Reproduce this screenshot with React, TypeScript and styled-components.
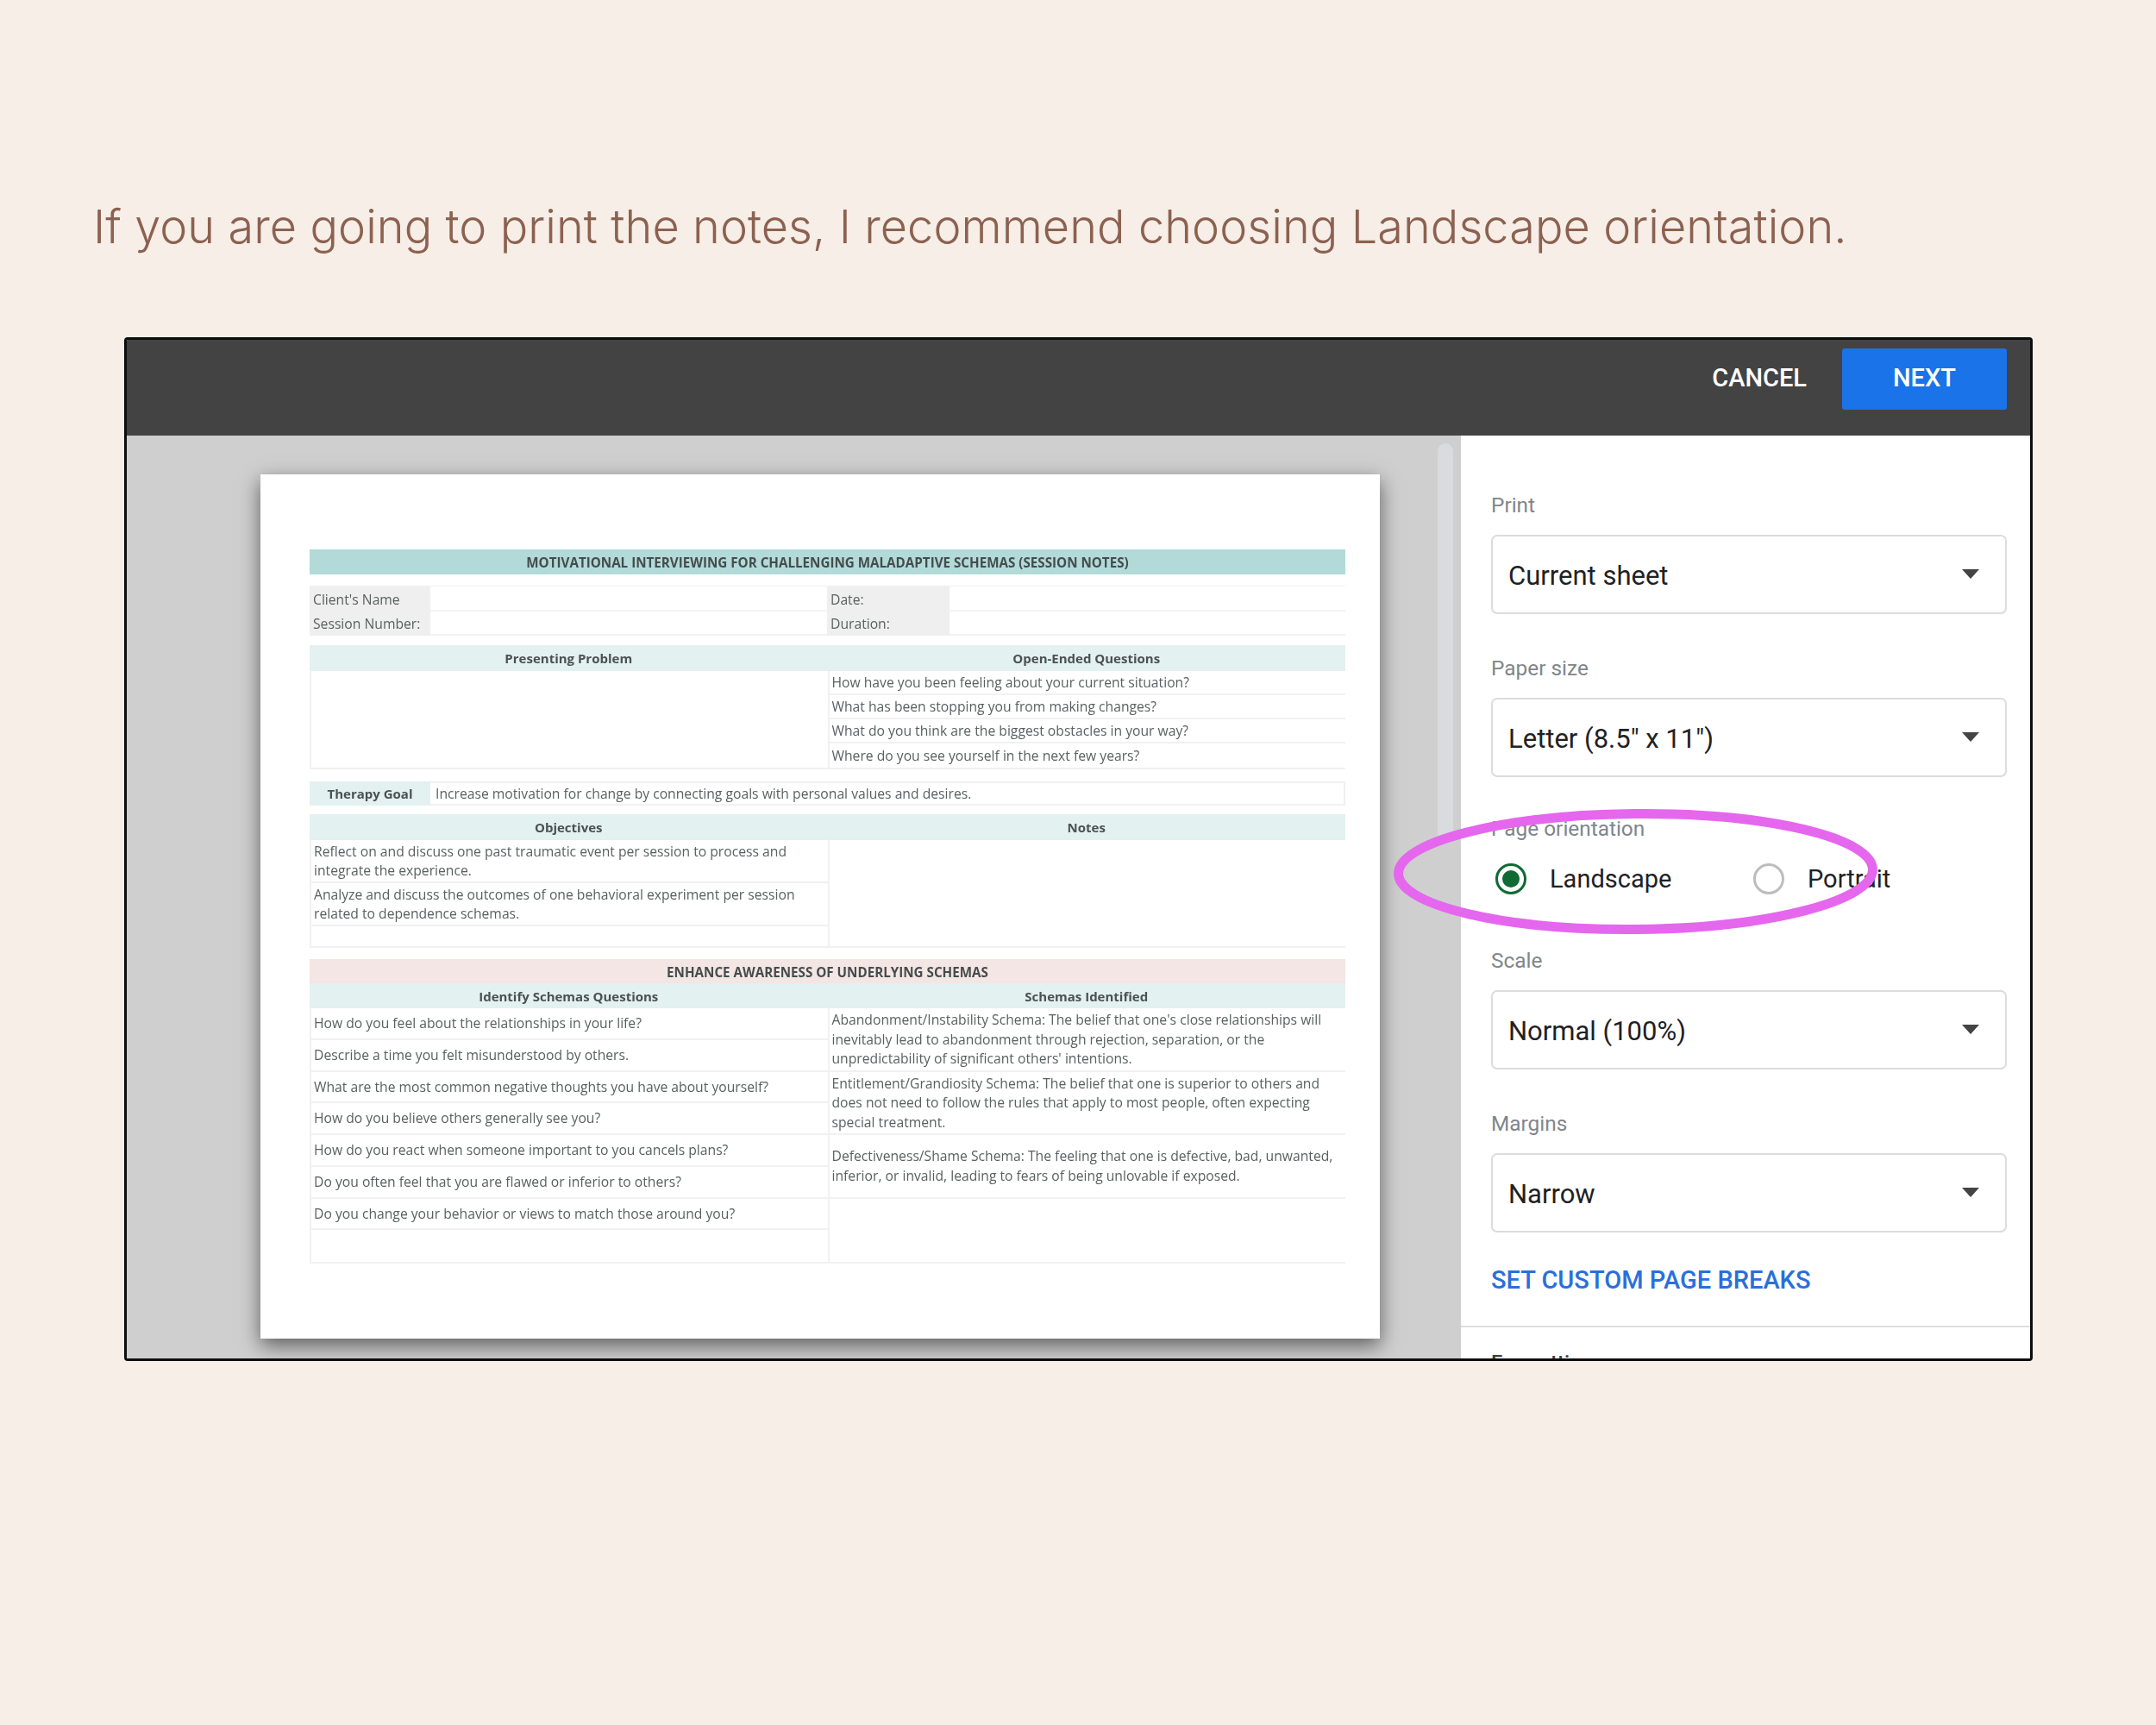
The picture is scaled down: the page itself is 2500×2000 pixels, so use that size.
import React from 'react';
import styled, { createGlobalStyle } from 'styled-components';

const GlobalStyle = createGlobalStyle`
  html, body {
    margin: 0;
    padding: 0;
    background: #f6eee7;
  }
`;

const Canvas = styled.main`
  width: 2500px;
  height: 2000px;
  background: #f6eee7;
  padding: 228px 0 0 108px;
  box-sizing: border-box;
  overflow: hidden;
`;

const Headline = styled.h1`
  margin: 0;
  height: 70px;
  font-family: 'Inter', sans-serif;
  font-weight: 300;
  font-size: 54px;
  line-height: 70px;
  letter-spacing: 0.08px;
  white-space: nowrap;
  color: #8c6150;
`;

const ShotWrap = styled.div`
  position: relative;
  width: 2213px;
  margin: 93px 0 0 36px;
`;

const Shot = styled.section`
  width: 2213px;
  height: 1187px;
  box-sizing: border-box;
  border: 3px solid #0d0d0d;
  border-radius: 4px;
  overflow: hidden;
  display: flex;
  flex-direction: column;
`;

const TopBar = styled.header`
  flex: 0 0 111px;
  background: #434343;
  display: flex;
  justify-content: flex-end;
  align-items: flex-start;
  padding: 10px 27px 0 0;
  box-sizing: border-box;
`;

const ActionButton = styled.button<{ $primary?: boolean }>`
  height: 71px;
  width: ${(p) => (p.$primary ? '191px' : 'auto')};
  margin-left: ${(p) => (p.$primary ? '41px' : '0')};
  padding: 0 0 3px;
  border: none;
  border-radius: 3px;
  background: ${(p) => (p.$primary ? '#1a73e8' : 'transparent')};
  color: #fff;
  font-family: 'Roboto', sans-serif;
  font-weight: 500;
  font-size: 29px;
`;

const Workspace = styled.div`
  flex: 1;
  min-height: 0;
  display: flex;
`;

const Preview = styled.div`
  flex: 0 0 1547px;
  background: #cfcfcf;
  display: flex;
  align-items: flex-start;
  padding: 9px 0 0 155px;
  box-sizing: border-box;
  overflow: hidden;
`;

const Scrollbar = styled.div`
  flex: 0 0 18px;
  height: 464px;
  margin-left: 67px;
  border-radius: 9px;
  background: #d9dbdf;
`;

const SheetPage = styled.article`
  flex: 0 0 1298px;
  height: 1002px;
  margin-top: 36px;
  box-sizing: border-box;
  padding: 87px 40px 0 57px;
  background: #fff;
  box-shadow: 0 8px 22px rgba(0, 0, 0, 0.55);
  font-family: 'Open Sans', sans-serif;
  font-size: 15.7px;
  color: #5a5f5f;
  filter: blur(0.45px);
`;

const TitleBar = styled.div<{ $tone: string; $top: number; $h: number }>`
  height: ${(p) => p.$h}px;
  margin-top: ${(p) => p.$top}px;
  box-sizing: border-box;
  padding-top: 1px;
  background: ${(p) => p.$tone};
  display: flex;
  align-items: center;
  justify-content: center;
  font-weight: 700;
  font-size: 15.2px;
  color: #454c4c;
  white-space: nowrap;
`;

const InfoGrid = styled.div`
  margin-top: 13px;
  display: grid;
  grid-template-columns: 140px 460px 142px 1fr;
  grid-template-rows: 29px 28px;
  border-top: 1px solid #f0f0f0;
`;

const InfoLabel = styled.div`
  background: #efefef;
  display: flex;
  align-items: center;
  padding-left: 4px;
  white-space: nowrap;
`;

const InfoValue = styled.div`
  border-bottom: 2px solid #f3f3f3;
`;

const HeaderRow = styled.div<{ $top?: number; $h?: number }>`
  margin-top: ${(p) => p.$top ?? 0}px;
  height: ${(p) => p.$h ?? 30}px;
  background: #e3f1f0;
  display: grid;
  grid-template-columns: 1fr 1fr;
`;

const HeaderCell = styled.div`
  display: flex;
  align-items: center;
  justify-content: center;
  font-weight: 700;
  font-size: 15px;
  color: #4b5151;
  white-space: nowrap;
`;

const SplitBody = styled.div`
  display: grid;
  grid-template-columns: 1fr 1fr;
  border-bottom: 2px solid #f1f1f1;
`;

const SplitColumn = styled.div`
  display: flex;
  flex-direction: column;
  border-left: 2px solid #f1f1f1;
  min-width: 0;
`;

const SplitCell = styled.div<{ $h: number; $lh?: number; $center?: boolean }>`
  height: ${(p) => p.$h}px;
  box-sizing: border-box;
  padding: 0 0 0 3px;
  display: flex;
  align-items: ${(p) => (p.$center ? 'center' : 'flex-start')};
  line-height: ${(p) => p.$lh ?? 22.5}px;
  border-bottom: 2px solid #f1f1f1;
  white-space: pre-line;

  &:last-child {
    border-bottom: none;
  }
`;

const GoalRow = styled.div`
  margin-top: 14px;
  height: 28px;
  display: grid;
  grid-template-columns: 140px 1fr;
`;

const GoalLabel = styled.div`
  background: #e3f1f0;
  display: flex;
  align-items: center;
  justify-content: center;
  font-weight: 700;
  font-size: 15px;
  color: #4b5151;
`;

const GoalText = styled.div`
  display: flex;
  align-items: center;
  padding-left: 6px;
  border: 2px solid #f1f1f1;
  border-left: none;
`;

const SidePanel = styled.aside`
  flex: 1;
  min-width: 0;
  background: #fff;
  padding: 66px 27px 0 35px;
  font-family: 'Roboto', sans-serif;
  position: relative;
`;

const FieldLabel = styled.div<{ $top?: number }>`
  margin-top: ${(p) => p.$top ?? 0}px;
  height: 30px;
  line-height: 30px;
  font-size: 24.4px;
  color: #80868b;
`;

const SelectBox = styled.div`
  height: 92px;
  margin-top: 19px;
  box-sizing: border-box;
  border: 2px solid #dadce0;
  border-radius: 7px;
  padding: 3px 30px 0 18px;
  display: flex;
  align-items: center;
  justify-content: space-between;
  font-size: 31px;
  color: #202124;
`;

const Caret = styled.span`
  width: 0;
  height: 0;
  margin-top: -4px;
  border-left: 10px solid transparent;
  border-right: 10px solid transparent;
  border-top: 11px solid #444;
`;

const RadioRow = styled.div`
  margin: 23px 0 0 5px;
  height: 40px;
  display: flex;
  align-items: center;
  font-size: 29px;
  color: #202124;
`;

const RadioOption = styled.label`
  width: 299px;
  flex: none;
  display: flex;
  align-items: center;
  gap: 27px;

  &:last-child {
    width: auto;
  }
`;

const RadioDot = styled.span<{ $on?: boolean }>`
  width: 36px;
  height: 36px;
  box-sizing: border-box;
  border-radius: 50%;
  border: 3px solid ${(p) => (p.$on ? '#0f6b33' : '#bdbdbd')};
  display: flex;
  align-items: center;
  justify-content: center;

  &::after {
    content: '';
    width: 20px;
    height: 20px;
    border-radius: 50%;
    background: ${(p) => (p.$on ? '#0f6b33' : 'transparent')};
  }
`;

const TextLink = styled.a`
  display: block;
  margin-top: 38px;
  height: 34px;
  line-height: 34px;
  font-size: 29px;
  font-weight: 500;
  color: #2a6fdb;
`;

const Divider = styled.hr`
  margin: 36px -27px 0 -35px;
  border: none;
  border-top: 2px solid #dedede;
`;

const NextSection = styled.div`
  margin-top: 27px;
  font-size: 24px;
  font-weight: 500;
  color: #3c4043;
`;

const Highlight = styled.svg`
  position: absolute;
  left: 1472px;
  top: 547px;
  width: 561px;
  height: 145px;
  overflow: visible;
  pointer-events: none;
`;

const questions = [
  'How have you been feeling about your current situation?',
  'What has been stopping you from making changes?',
  'What do you think are the biggest obstacles in your way?',
  'Where do you see yourself in the next few years?',
];

const objectives = [
  { text: 'Reflect on and discuss one past traumatic event per session to process and\nintegrate the experience.', h: 50 },
  { text: 'Analyze and discuss the outcomes of one behavioral experiment per session\nrelated to dependence schemas.', h: 50 },
  { text: '', h: 23 },
];

const schemaQuestions = [
  'How do you feel about the relationships in your life?',
  'Describe a time you felt misunderstood by others.',
  'What are the most common negative thoughts you have about yourself?',
  'How do you believe others generally see you?',
  'How do you react when someone important to you cancels plans?',
  'Do you often feel that you are flawed or inferior to others?',
  'Do you change your behavior or views to match those around you?',
  '',
];

const schemas = [
  { text: "Abandonment/Instability Schema: The belief that one's close relationships will\ninevitably lead to abandonment through rejection, separation, or the\nunpredictability of significant others' intentions.", center: true },
  { text: 'Entitlement/Grandiosity Schema: The belief that one is superior to others and\ndoes not need to follow the rules that apply to most people, often expecting\nspecial treatment.', center: true },
  { text: 'Defectiveness/Shame Schema: The feeling that one is defective, bad, unwanted,\ninferior, or invalid, leading to fears of being unlovable if exposed.', center: true },
  { text: '', center: false },
];

function Select({ value }: { value: string }) {
  return (
    <SelectBox>
      {value}
      <Caret />
    </SelectBox>
  );
}

export default function App() {
  return (
    <Canvas>
      <GlobalStyle />
      <Headline>If you are going to print the notes, I recommend choosing Landscape orientation.</Headline>
      <ShotWrap>
        <Shot>
          <TopBar>
            <ActionButton>CANCEL</ActionButton>
            <ActionButton $primary>NEXT</ActionButton>
          </TopBar>
          <Workspace>
            <Preview>
              <SheetPage>
                <TitleBar $tone="#b2dad8" $top={0} $h={29}>
                  MOTIVATIONAL INTERVIEWING FOR CHALLENGING MALADAPTIVE SCHEMAS (SESSION NOTES)
                </TitleBar>
                <InfoGrid>
                  <InfoLabel>Client's Name</InfoLabel>
                  <InfoValue />
                  <InfoLabel>Date:</InfoLabel>
                  <InfoValue />
                  <InfoLabel>Session Number:</InfoLabel>
                  <InfoValue />
                  <InfoLabel>Duration:</InfoLabel>
                  <InfoValue />
                </InfoGrid>

                <HeaderRow $top={11}>
                  <HeaderCell>Presenting Problem</HeaderCell>
                  <HeaderCell>Open-Ended Questions</HeaderCell>
                </HeaderRow>
                <SplitBody>
                  <SplitColumn />
                  <SplitColumn>
                    {questions.map((q) => (
                      <SplitCell key={q} $h={28} $center>{q}</SplitCell>
                    ))}
                  </SplitColumn>
                </SplitBody>

                <GoalRow>
                  <GoalLabel>Therapy Goal</GoalLabel>
                  <GoalText>Increase motivation for change by connecting goals with personal values and desires.</GoalText>
                </GoalRow>

                <HeaderRow $top={10}>
                  <HeaderCell>Objectives</HeaderCell>
                  <HeaderCell>Notes</HeaderCell>
                </HeaderRow>
                <SplitBody>
                  <SplitColumn>
                    {objectives.map((o, i) => (
                      <SplitCell key={i} $h={o.h} $center>{o.text}</SplitCell>
                    ))}
                  </SplitColumn>
                  <SplitColumn />
                </SplitBody>

                <TitleBar $tone="#f3e6e5" $top={13} $h={28}>
                  ENHANCE AWARENESS OF UNDERLYING SCHEMAS
                </TitleBar>
                <HeaderRow $h={29}>
                  <HeaderCell>Identify Schemas Questions</HeaderCell>
                  <HeaderCell>Schemas Identified</HeaderCell>
                </HeaderRow>
                <SplitBody>
                  <SplitColumn>
                    {schemaQuestions.map((q, i) => (
                      <SplitCell key={i} $h={36.75} $center>{q}</SplitCell>
                    ))}
                  </SplitColumn>
                  <SplitColumn>
                    {schemas.map((s, i) => (
                      <SplitCell key={i} $h={73.5} $center={s.center}>{s.text}</SplitCell>
                    ))}
                  </SplitColumn>
                </SplitBody>
              </SheetPage>
              <Scrollbar />
            </Preview>
            <SidePanel>
              <FieldLabel>Print</FieldLabel>
              <Select value="Current sheet" />
              <FieldLabel $top={48}>Paper size</FieldLabel>
              <Select value={'Letter (8.5" x 11")'} />
              <FieldLabel $top={45}>Page orientation</FieldLabel>
              <RadioRow>
                <RadioOption><RadioDot $on />Landscape</RadioOption>
                <RadioOption><RadioDot />Portrait</RadioOption>
              </RadioRow>
              <FieldLabel $top={60}>Scale</FieldLabel>
              <Select value="Normal (100%)" />
              <FieldLabel $top={48}>Margins</FieldLabel>
              <Select value="Narrow" />
              <TextLink>SET CUSTOM PAGE BREAKS</TextLink>
              <Divider />
              <NextSection>Formatting</NextSection>
            </SidePanel>
          </Workspace>
        </Shot>
        <Highlight viewBox="0 0 561 145">
          <ellipse
            cx="280.5"
            cy="72.5"
            rx="275"
            ry="67"
            fill="none"
            stroke="#e567ee"
            strokeWidth="11"
            transform="rotate(-0.5 280.5 72.5)"
          />
        </Highlight>
      </ShotWrap>
    </Canvas>
  );
}
